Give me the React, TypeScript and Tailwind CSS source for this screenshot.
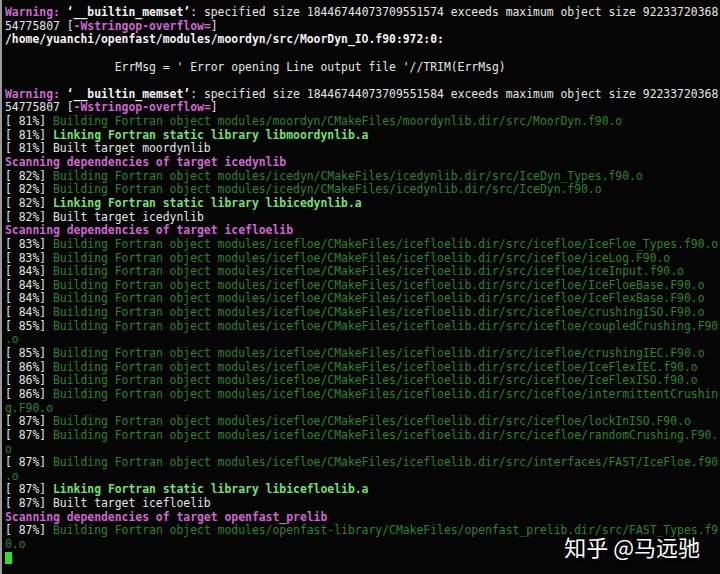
import React from "react";

type Seg = [string, string];

const W = "text-[#e6e6e6]";
const WB = "text-[#f2f2f2] font-bold";
const M = "text-[#d166d1] font-bold";
const G = "text-[#2b862b]";
const GB = "text-[#72e072] font-bold";

const pre = "modules/icefloe/CMakeFiles/icefloelib.dir/src/";

const lines: Seg[][] = [
  [["Warning: ", M], ["‘__builtin_memset’", WB], [": specified size 18446744073709551574 exceeds maximum object size 92233720368", W]],
  [["54775807 [", W], ["-Wstringop-overflow=", M], ["]", W]],
  [["/home/yuanchi/openfast/modules/moordyn/src/MoorDyn_IO.f90:972:0:", WB]],
  [],
  [["                ErrMsg = ' Error opening Line output file '//TRIM(ErrMsg)", W]],
  [],
  [["Warning: ", M], ["‘__builtin_memset’", WB], [": specified size 18446744073709551584 exceeds maximum object size 92233720368", W]],
  [["54775807 [", W], ["-Wstringop-overflow=", M], ["]", W]],
  [["[ 81%] ", W], ["Building Fortran object modules/moordyn/CMakeFiles/moordynlib.dir/src/MoorDyn.f90.o", G]],
  [["[ 81%] ", W], ["Linking Fortran static library libmoordynlib.a", GB]],
  [["[ 81%] Built target moordynlib", W]],
  [["Scanning dependencies of target icedynlib", M]],
  [["[ 82%] ", W], ["Building Fortran object modules/icedyn/CMakeFiles/icedynlib.dir/src/IceDyn_Types.f90.o", G]],
  [["[ 82%] ", W], ["Building Fortran object modules/icedyn/CMakeFiles/icedynlib.dir/src/IceDyn.f90.o", G]],
  [["[ 82%] ", W], ["Linking Fortran static library libicedynlib.a", GB]],
  [["[ 82%] Built target icedynlib", W]],
  [["Scanning dependencies of target icefloelib", M]],
  [["[ 83%] ", W], ["Building Fortran object " + pre + "icefloe/IceFloe_Types.f90.o", G]],
  [["[ 83%] ", W], ["Building Fortran object " + pre + "icefloe/iceLog.F90.o", G]],
  [["[ 84%] ", W], ["Building Fortran object " + pre + "icefloe/iceInput.f90.o", G]],
  [["[ 84%] ", W], ["Building Fortran object " + pre + "icefloe/IceFloeBase.F90.o", G]],
  [["[ 84%] ", W], ["Building Fortran object " + pre + "icefloe/IceFlexBase.F90.o", G]],
  [["[ 84%] ", W], ["Building Fortran object " + pre + "icefloe/crushingISO.F90.o", G]],
  [["[ 85%] ", W], ["Building Fortran object " + pre + "icefloe/coupledCrushing.F90", G]],
  [[".o", G]],
  [["[ 85%] ", W], ["Building Fortran object " + pre + "icefloe/crushingIEC.F90.o", G]],
  [["[ 86%] ", W], ["Building Fortran object " + pre + "icefloe/IceFlexIEC.f90.o", G]],
  [["[ 86%] ", W], ["Building Fortran object " + pre + "icefloe/IceFlexISO.f90.o", G]],
  [["[ 86%] ", W], ["Building Fortran object " + pre + "icefloe/intermittentCrushin", G]],
  [["g.F90.o", G]],
  [["[ 87%] ", W], ["Building Fortran object " + pre + "icefloe/lockInISO.F90.o", G]],
  [["[ 87%] ", W], ["Building Fortran object " + pre + "icefloe/randomCrushing.F90.", G]],
  [["o", G]],
  [["[ 87%] ", W], ["Building Fortran object " + pre + "interfaces/FAST/IceFloe.f90", G]],
  [[".o", G]],
  [["[ 87%] ", W], ["Linking Fortran static library libicefloelib.a", GB]],
  [["[ 87%] Built target icefloelib", W]],
  [["Scanning dependencies of target openfast_prelib", M]],
  [["[ 87%] ", W], ["Building Fortran object modules/openfast-library/CMakeFiles/openfast_prelib.dir/src/FAST_Types.f9", G]],
  [["0.o", G]],
];

export default function App() {
  return (
    <div className="relative w-[720px] h-[574px] overflow-hidden bg-[#050505] border-l-2 border-[#9a9a9a]">
      <div className="pl-[3px] pt-[6px] font-['DejaVu_Sans_Mono',monospace] text-[11.4px] leading-[13.65px] whitespace-pre">
        {lines.map((line, i) => (
          <div key={i} className="h-[13.65px]">
            {line.map(([text, cls], j) => (
              <span key={j} className={cls}>
                {text}
              </span>
            ))}
          </div>
        ))}
        <div className="h-[13.65px] flex items-center">
          <span className="inline-block w-[7px] h-[12px] bg-[#2ee02e]" />
        </div>
      </div>
      <div className="absolute right-[20px] bottom-[17px] text-white text-[22px] leading-none font-['Noto_Sans_CJK_SC',sans-serif] [text-shadow:0_0_3px_rgba(0,0,0,0.9),1px_1px_2px_rgba(0,0,0,0.9)]">
        知乎 @马远驰
      </div>
    </div>
  );
}
